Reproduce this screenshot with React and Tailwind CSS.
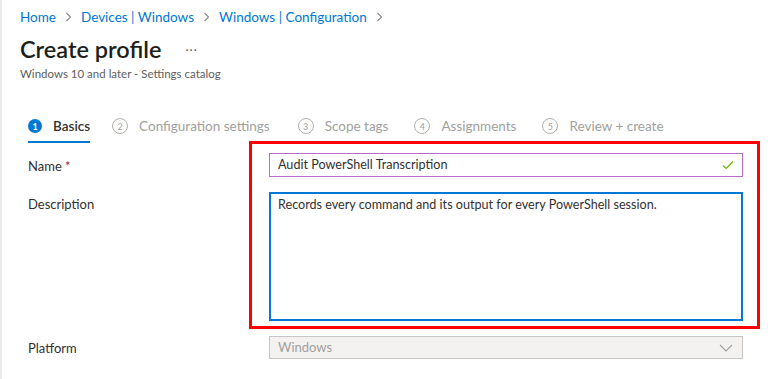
import React from "react";

function Chevron() {
  return (
    <svg width="7" height="10" viewBox="0 0 7 10" className="mx-[9px] text-[#8a8886]">
      <path d="M1.5 1 L5.5 5 L1.5 9" fill="none" stroke="currentColor" strokeWidth="1.1" />
    </svg>
  );
}

function Step({ n, label, active, className = "" }) {
  return (
    <div className={`relative flex items-center h-[32px] ${className}`}>
      {active ? (
        <span className="flex items-center justify-center w-[14px] h-[14px] rounded-full bg-[#0078d4] text-white text-[9px] font-bold leading-none">
          {n}
        </span>
      ) : (
        <span className="flex items-center justify-center w-[16px] h-[16px] rounded-full border border-[#b3b0ad] text-[#a19f9d] text-[9px] leading-none">
          {n}
        </span>
      )}
      <span className={`ml-[11px] text-[13.5px] ${active ? "font-semibold text-[#323130]" : "text-[#a19f9d]"}`}>{label}</span>
      {active && <span className="absolute left-0 right-0 bottom-[-1px] h-[2px] bg-[#0078d4]" />}
    </div>
  );
}

export default function App() {
  return (
    <div className="relative w-[768px] h-[379px] overflow-hidden bg-white border-l-2 border-[#ebebeb] font-['Segoe_UI','Lato','Noto_Sans',sans-serif] text-[#323130]">
      <div className="pl-[18px] pt-[8px]">
        <div className="flex items-center h-[18px] text-[13.5px] text-[#0078d4]">
          <span>Home</span>
          <Chevron />
          <span>Devices | Windows</span>
          <Chevron />
          <span>Windows | Configuration</span>
          <Chevron />
        </div>
        <div className="flex items-center mt-[9px] h-[30px]">
          <h1 className="text-[23.5px] font-semibold text-[#201f1e] leading-none">Create profile</h1>
          <span className="ml-[24px] text-[12px] text-[#605e5c] tracking-[1px] leading-none">···</span>
        </div>
        <div className="text-[11.5px] text-[#605e5c]">Windows 10 and later - Settings catalog</div>
      </div>

      <div className="flex items-center mt-[28px] pl-[26px]">
        <Step n="1" label="Basics" active />
        <Step n="2" label="Configuration settings" className="ml-[22px]" />
        <Step n="3" label="Scope tags" className="ml-[28px]" />
        <Step n="4" label="Assignments" className="ml-[26px]" />
        <Step n="5" label="Review + create" className="ml-[26px]" />
      </div>

      <div className="grid grid-cols-[241px_474px] pl-[26px] mt-[11px] text-[13px]">
        <div className="pt-[4px]">
          Name <span className="text-[#a4262c]">*</span>
        </div>
        <div className="flex items-center h-[24px] border border-[#b46fc9] px-[8px] text-[12.6px]">
          <span className="flex-1">Audit PowerShell Transcription</span>
          <svg width="12" height="10" viewBox="0 0 12 10">
            <path d="M1 5.5 L4.2 8.5 L11 1.5" fill="none" stroke="#6bb700" strokeWidth="1.2" />
          </svg>
        </div>

        <div className="pt-[3px] mt-[15px]">Description</div>
        <div className="mt-[15px] h-[129px] border-2 border-[#0078d4] px-[7px] pt-[2px] text-[12.6px]">
          Records every command and its output for every PowerShell session.
        </div>

        <div className="pt-[3px] mt-[15px]">Platform</div>
        <div className="mt-[15px] flex items-center h-[23px] border border-[#c8c6c4] bg-[#f3f2f1] px-[8px] text-[#a19f9d]">
          <span className="flex-1">Windows</span>
          <svg width="14" height="8" viewBox="0 0 14 8" className="mr-[1px]">
            <path d="M1 1 L7 7 L13 1" fill="none" stroke="#a19f9d" strokeWidth="1.1" />
          </svg>
        </div>
      </div>

      <div className="absolute left-[247px] top-[141px] w-[511px] h-[188px] border-[3px] border-[#ff0000]" />
    </div>
  );
}
